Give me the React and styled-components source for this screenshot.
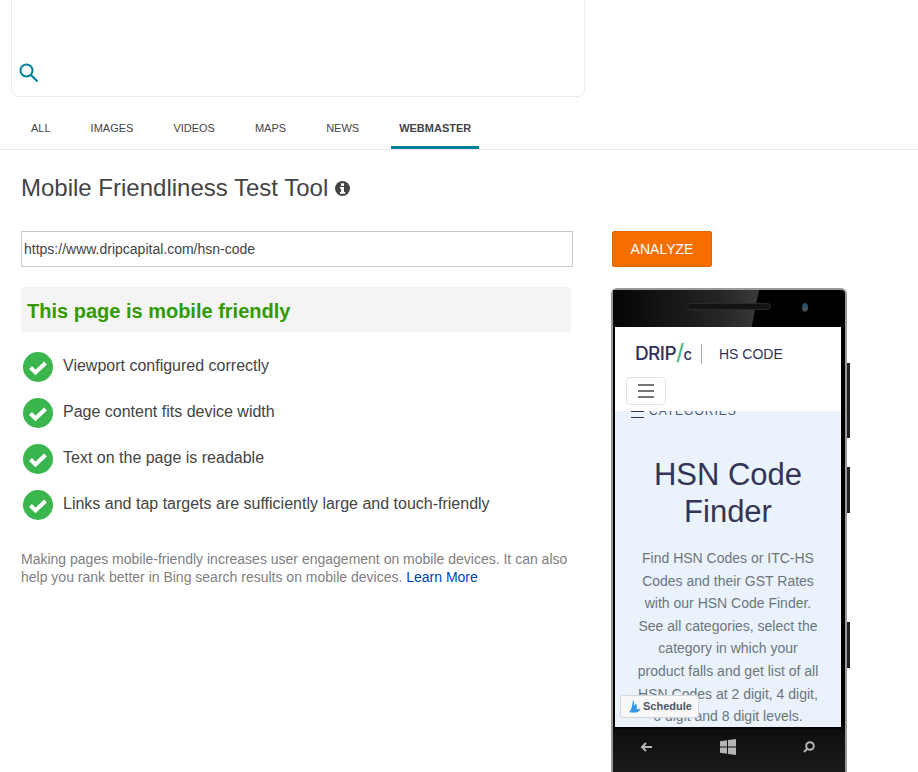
import React from "react";
import styled, { createGlobalStyle } from "styled-components";

const GlobalStyle = createGlobalStyle`
    html, body {
        margin: 0;
        padding: 0;
        height: 772px;
        overflow: hidden;
        background: #fff;
        font-family: "Liberation Sans", Arial, sans-serif;
    }
`;

const SearchBox = styled.div`
    box-sizing: border-box;
    display: flex;
    align-items: flex-end;
    width: 574px;
    height: 97px;
    margin-left: 11px;
    padding: 0 0 13px 7px;
    border: 1px solid #ebebeb;
    border-top: 0;
    border-radius: 0 0 8px 8px;
    color: #00809d;
`;

const TabBar = styled.nav`
    box-sizing: border-box;
    display: flex;
    height: 53px;
    padding-left: 11px;
    border-bottom: 1px solid #e8e8e8;
`;

const Tab = styled.a`
    box-sizing: border-box;
    display: flex;
    align-items: center;
    justify-content: center;
    height: 52px;
    padding: 12px ${props => (props.$active ? 8 : 20)}px 0;
    margin-left: ${props => (props.$active ? 12 : 0)}px;
    font-size: 11px;
    font-weight: ${props => (props.$active ? 700 : 400)};
    color: #444;
    border-bottom: 3px solid ${props => (props.$active ? "#00809d" : "transparent")};
`;

const Main = styled.main`
    display: flex;
    padding-left: 21px;
`;

const LeftColumn = styled.section`
    width: 552px;
`;

const Title = styled.h1`
    display: flex;
    align-items: center;
    gap: 7px;
    height: 26px;
    margin: 25px 0 0;
    font-size: 24px;
    font-weight: 400;
    color: #444;
    white-space: nowrap;
`;

const UrlInput = styled.div`
    box-sizing: border-box;
    width: 552px;
    height: 36px;
    margin-top: 30px;
    padding: 0 2px;
    border: 1px solid #c8c8c8;
    font-size: 14px;
    line-height: 35px;
    color: #444;
`;

const Verdict = styled.div`
    box-sizing: border-box;
    width: 550px;
    height: 45px;
    margin-top: 20px;
    padding-left: 6px;
    background: #f4f4f4;
    font-size: 20px;
    font-weight: 700;
    line-height: 48px;
    color: #329a00;
`;

const CheckList = styled.ul`
    display: flex;
    flex-direction: column;
    gap: 16px;
    margin: 20px 0 0;
    padding: 0 0 0 2px;
    list-style: none;
`;

const CheckRow = styled.li`
    display: flex;
    align-items: center;
    gap: 10px;
    height: 30px;
    font-size: 16px;
    color: #444;
`;

const CheckText = styled.span`
    padding-bottom: 2px;
`;

const Note = styled.p`
    margin: 30px 0 0;
    width: 552px;
    font-size: 14px;
    line-height: 18px;
    color: #808080;
`;

const LearnMore = styled.a`
    color: #0044c1;
`;

const RightColumn = styled.aside`
    margin-left: 39px;
`;

const AnalyzeButton = styled.button`
    display: block;
    box-sizing: border-box;
    width: 100px;
    height: 36px;
    margin: 81px 0 0;
    padding: 0;
    border: 1px solid #e06500;
    border-radius: 2px;
    background: #f66d00;
    color: #fff;
    font-family: inherit;
    font-size: 14px;
`;

const Phone = styled.div`
    position: relative;
    box-sizing: border-box;
    width: 236px;
    height: 500px;
    margin: 21px 0 0 -1px;
    padding: 37px 4px 0 2px;
    border: 2px solid #999;
    border-bottom: 0;
    border-radius: 6px 6px 0 0;
    background: linear-gradient(180deg, #000 0, #000 437px, #0e0e0e 440px, #1a1a1a 482px);
`;

const Glare = styled.div`
    position: absolute;
    top: 0;
    left: 0;
    width: 146px;
    height: 37px;
    background: linear-gradient(90deg, #050505 0, #262626 75%, #3a3a3a 100%);
    clip-path: polygon(0 0, 100% 0, 95% 100%, 0 100%);
`;

const Speaker = styled.div`
    position: absolute;
    top: 13px;
    left: 74px;
    box-sizing: border-box;
    width: 84px;
    height: 7px;
    border: 1px solid #2a2a2a;
    border-radius: 4px;
    background: #141414;
`;

const Camera = styled.div`
    position: absolute;
    top: 13px;
    left: 189px;
    width: 6px;
    height: 9px;
    border-radius: 50%;
    background: linear-gradient(160deg, #27506e 0, #27506e 40%, #555 70%, #111 100%);
`;

const SideKey = styled.div`
    position: absolute;
    right: -5px;
    top: ${props => props.$top}px;
    width: 3px;
    height: ${props => props.$height}px;
    background: #222;
`;

const Screen = styled.div`
    position: relative;
    width: 226px;
    height: 400px;
    overflow: hidden;
    background: #eaf3fb;
`;

const SiteHeader = styled.header`
    box-sizing: border-box;
    height: 84px;
    padding: 17px 0 0 11px;
    background: #fff;
`;

const BrandRow = styled.div`
    display: flex;
    align-items: center;
    height: 20px;
    padding-left: 9px;
`;

const Logo = styled.span`
    width: 57px;
    font-family: "Inter", sans-serif;
    font-size: 19px;
    font-weight: 500;
    line-height: 20px;
    letter-spacing: -0.6px;
    white-space: nowrap;
    color: #34315c;
`;

const LogoSmall = styled.span`
    font-size: 15px;
`;

const Slash = styled.span`
    font-size: 22px;
    line-height: 0;
    font-weight: 500;
    color: #4cb88a;
`;

const Divider = styled.span`
    width: 1px;
    height: 20px;
    margin: 0 17px 0 9px;
    background: #aaa;
`;

const SiteName = styled.span`
    font-size: 14px;
    color: #34315c;
`;

const MenuButton = styled.div`
    box-sizing: border-box;
    display: flex;
    flex-direction: column;
    justify-content: center;
    gap: 4.5px;
    width: 40px;
    height: 28px;
    margin-top: 13px;
    padding: 0 11px;
    border: 1px solid #e3e3e3;
    border-radius: 4px;
    background: #fff;
`;

const MenuLine = styled.span`
    display: block;
    height: 1.5px;
    background: #777;
`;

const Categories = styled.div`
    display: flex;
    align-items: center;
    gap: 5px;
    height: 8px;
    overflow: hidden;
    padding-left: 16px;
    font-size: 12px;
    letter-spacing: 1px;
    color: #4a5a78;
`;

const CategoryIcon = styled.span`
    display: block;
    box-sizing: border-box;
    width: 13px;
    height: 7px;
    margin-top: -2px;
    border-top: 1.5px solid #34315c;
    border-bottom: 1.5px solid #34315c;
`;

const CategoryText = styled.span`
    margin-top: -8px;
`;

const Hero = styled.h2`
    margin: 37px 0 0;
    text-align: center;
    font-size: 31px;
    font-weight: 400;
    line-height: 37px;
    color: #333358;
`;

const HeroText = styled.p`
    margin: 17px 0 0;
    padding: 0 20px;
    text-align: center;
    font-size: 14px;
    line-height: 22.6px;
    color: #6c757d;
`;

const ScheduleButton = styled.div`
    position: absolute;
    left: 5px;
    bottom: 9px;
    box-sizing: border-box;
    display: flex;
    align-items: center;
    gap: 2px;
    width: 79px;
    height: 23px;
    padding: 0 0 1px 8px;
    border: 1px solid #d5d5d5;
    border-radius: 3px;
    background: #f8f8f8;
    font-size: 11px;
    font-weight: 700;
    color: #4a5a6a;
`;

const NavBar = styled.div`
    display: flex;
    align-items: center;
    justify-content: space-between;
    height: 40px;
    padding: 0 26px 0 25px;
    color: #b5b5b5;
`;

const SearchIcon = () => (
    <svg width="20" height="20" viewBox="0 0 20 20" fill="none" stroke="currentColor" strokeWidth="2">
        <circle cx="7.5" cy="7.5" r="6" />
        <path d="M12 12l6.5 6.5" strokeWidth="2.2" />
    </svg>
);

const InfoIcon = () => (
    <svg width="15" height="15" viewBox="0 0 14 14">
        <circle cx="7" cy="7" r="7" fill="#444" />
        <rect x="5.6" y="2.2" width="2.8" height="2.4" fill="#fff" />
        <path d="M4.600 5.600h3.800v4.600h1.100v1.600H4.600v-1.600h1.100V7.200H4.600z" fill="#fff" />
    </svg>
);

const CheckIcon = () => (
    <svg width="30" height="30" viewBox="0 0 30 30">
        <circle cx="15" cy="15" r="15" fill="#3bb54e" />
        <path d="M7.5 15.500l5 5L22.500 11" fill="none" stroke="#fff" strokeWidth="4" />
    </svg>
);

const ScheduleIcon = () => (
    <svg width="12" height="14" viewBox="0 0 12 14">
        <path d="M0.500 12.500C2.500 11 3.500 6 4 0.500C5 3 5.200 5 5.300 7C6 6 6.500 5 7 4C7.800 6 7.900 8 7.600 10.500L11.500 9.500C11 11.500 9 13.500 6.500 13.500H1z" fill="#2f97e6" />
    </svg>
);

const BackIcon = () => (
    <svg width="12" height="10" viewBox="0 0 12 10" fill="none" stroke="currentColor" strokeWidth="2">
        <path d="M12 5H2M6 1L2 5l4 4" />
    </svg>
);

const WindowsIcon = () => (
    <svg width="16" height="16" viewBox="0 0 16 16" fill="currentColor">
        <path d="M0 2.300L7 1.200V7.500H0zM8 1L16 0V7.500H8zM0 8.500H7V14.800L0 13.700zM8 8.500H16V16L8 15z" />
    </svg>
);

const PhoneSearchIcon = () => (
    <svg width="12" height="12" viewBox="0 0 12 12" fill="none" stroke="currentColor" strokeWidth="2">
        <circle cx="7" cy="5" r="3.800" />
        <path d="M4.500 7.500L1 11" />
    </svg>
);

const tabs = [
    { label: "ALL" },
    { label: "IMAGES" },
    { label: "VIDEOS" },
    { label: "MAPS" },
    { label: "NEWS" },
    { label: "WEBMASTER", active: true },
];

const checks = [
    "Viewport configured correctly",
    "Page content fits device width",
    "Text on the page is readable",
    "Links and tap targets are sufficiently large and touch-friendly",
];

const App = () => (
    <>
        <GlobalStyle />
        <SearchBox>
            <SearchIcon />
        </SearchBox>
        <TabBar>
            {tabs.map(tab => (
                <Tab key={tab.label} $active={tab.active}>
                    {tab.label}
                </Tab>
            ))}
        </TabBar>
        <Main>
            <LeftColumn>
                <Title>
                    Mobile Friendliness Test Tool <InfoIcon />
                </Title>
                <UrlInput>https://www.dripcapital.com/hsn-code</UrlInput>
                <Verdict>This page is mobile friendly</Verdict>
                <CheckList>
                    {checks.map(text => (
                        <CheckRow key={text}>
                            <CheckIcon />
                            <CheckText>{text}</CheckText>
                        </CheckRow>
                    ))}
                </CheckList>
                <Note>
                    Making pages mobile-friendly increases user engagement on mobile devices. It can also
                    help you rank better in Bing search results on mobile devices. <LearnMore>Learn More</LearnMore>
                </Note>
            </LeftColumn>
            <RightColumn>
                <AnalyzeButton>ANALYZE</AnalyzeButton>
                <Phone>
                    <Glare />
                    <Speaker />
                    <Camera />
                    <SideKey $top={73} $height={75} />
                    <SideKey $top={177} $height={46} />
                    <SideKey $top={332} $height={46} />
                    <Screen>
                        <SiteHeader>
                            <BrandRow>
                                <Logo>
                                    DRIP<Slash>/</Slash>
                                    <LogoSmall>c</LogoSmall>
                                </Logo>
                                <Divider />
                                <SiteName>HS CODE</SiteName>
                            </BrandRow>
                            <MenuButton>
                                <MenuLine />
                                <MenuLine />
                                <MenuLine />
                            </MenuButton>
                        </SiteHeader>
                        <Categories>
                            <CategoryIcon />
                            <CategoryText>CATEGORIES</CategoryText>
                        </Categories>
                        <Hero>
                            HSN Code
                            <br />
                            Finder
                        </Hero>
                        <HeroText>
                            Find HSN Codes or ITC-HS Codes and their GST Rates with our HSN Code Finder. See all
                            categories, select the category in which your product falls and get list of all HSN
                            Codes at 2 digit, 4 digit, 6 digit and 8 digit levels.
                        </HeroText>
                        <ScheduleButton>
                            <ScheduleIcon />
                            Schedule
                        </ScheduleButton>
                    </Screen>
                    <NavBar>
                        <BackIcon />
                        <WindowsIcon />
                        <PhoneSearchIcon />
                    </NavBar>
                </Phone>
            </RightColumn>
        </Main>
    </>
);

export default App;
